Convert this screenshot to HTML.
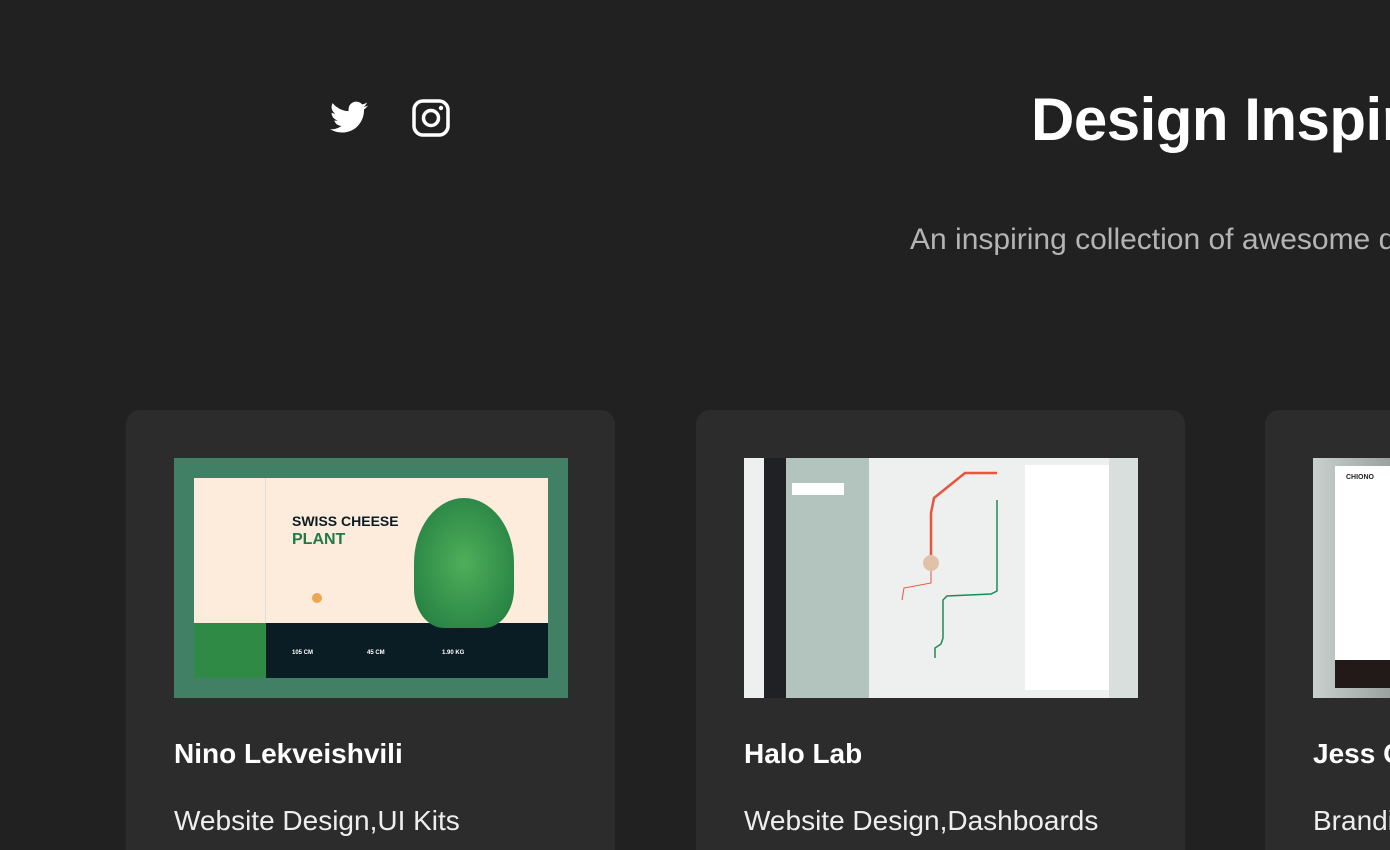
<!DOCTYPE html>
<html><head><meta charset="utf-8"><style>
*{margin:0;padding:0;box-sizing:border-box}
html,body{width:1390px;height:850px;overflow:hidden}
body{background:#212121;font-family:"Liberation Sans",sans-serif;position:relative;color:#fff}
#wrap{position:absolute;left:0;top:0;width:1390px;height:850px;overflow:hidden}
.abs{position:absolute}
h1{position:absolute;left:1031px;top:85px;font-size:60px;font-weight:bold;white-space:nowrap;letter-spacing:-0.5px}
.sub{position:absolute;left:910px;top:223px;font-size:30px;color:#b4b4b4;white-space:nowrap;font-weight:300}
.card{position:absolute;top:410px;width:489px;height:460px;background:#2c2c2c;border-radius:14px}
.img{position:absolute;left:48px;top:48px;width:394px;height:240px;overflow:hidden}
.name{position:absolute;left:48px;top:328px;font-size:28px;font-weight:bold;white-space:nowrap}
.tags{position:absolute;left:48px;top:395px;font-size:28px;color:#eee;white-space:nowrap}
</style></head><body><div id="wrap">
<svg class="abs" style="left:330px;top:101px" width="38" height="33" viewBox="0 0 24 20"><path fill="#fff" d="M24 2.4c-.9.4-1.8.7-2.8.8 1-.6 1.8-1.6 2.2-2.7-1 .6-2 1-3.1 1.2C19.400.7 18.100 0 16.600 0c-2.700 0-4.900 2.200-4.900 4.900 0 .4 0 .8.1 1.100C7.700 5.800 4.100 3.900 1.700.9c-.4.7-.7 1.600-.7 2.500 0 1.700.9 3.200 2.200 4.100-.8 0-1.600-.2-2.200-.6v.1c0 2.400 1.700 4.400 3.900 4.800-.4.1-.8.2-1.300.2-.3 0-.6 0-.9-.1.6 2 2.400 3.400 4.600 3.400-1.700 1.300-3.800 2.100-6.100 2.100-.4 0-.8 0-1.200-.1 2.200 1.400 4.800 2.200 7.500 2.200 9.100 0 14-7.500 14-14v-.6c1-.7 1.800-1.600 2.500-2.500z"/></svg>
<svg class="abs" style="left:412px;top:99px" width="38" height="38" viewBox="0 0 38 38"><rect x="2" y="2" width="34" height="34" rx="9" fill="none" stroke="#fff" stroke-width="3.5"/><circle cx="19" cy="19" r="7.5" fill="none" stroke="#fff" stroke-width="3.5"/><circle cx="29" cy="9" r="2.2" fill="#fff"/></svg>
<h1>Design Inspiration</h1>
<div class="sub">An inspiring collection of awesome design</div>

<div class="card" style="left:126px">
 <div class="img" style="background:#428066">
  <div class="abs" style="left:20px;top:20px;width:354px;height:200px;background:#fdebdc"></div>
  <div class="abs" style="left:91px;top:20px;width:1px;height:145px;background:#ddd"></div>
  <div class="abs" style="left:20px;top:165px;width:72px;height:55px;background:#2e8a45"></div>
  <div class="abs" style="left:92px;top:165px;width:282px;height:55px;background:#0b1d24"></div>
  <div class="abs" style="left:118px;top:55px;font-size:14px;font-weight:bold;color:#0b1d24">SWISS CHEESE</div>
  <div class="abs" style="left:118px;top:73px;font-size:16px;font-weight:bold;color:#1f7a45">PLANT</div>
  <div class="abs" style="left:138px;top:135px;width:10px;height:10px;border-radius:50%;background:#eea453"></div>
  <div class="abs" style="left:240px;top:40px;width:100px;height:130px;border-radius:50% 50% 30% 30%;background:radial-gradient(#4fae5a,#1f7a3f)"></div>
  <div class="abs" style="left:118px;top:192px;font-size:6px;font-weight:bold;color:#fff">105 CM</div>
  <div class="abs" style="left:193px;top:192px;font-size:6px;font-weight:bold;color:#fff">45 CM</div>
  <div class="abs" style="left:268px;top:192px;font-size:6px;font-weight:bold;color:#fff">1.90 KG</div>
 </div>
 <div class="name">Nino Lekveishvili</div>
 <div class="tags">Website Design,UI Kits</div>
</div>

<div class="card" style="left:696px">
 <div class="img" style="background:#eef0ef">
  <div class="abs" style="left:20px;top:0;width:22px;height:240px;background:#1f2124"></div>
  <div class="abs" style="left:42px;top:0;width:83px;height:240px;background:#b3c4be"></div>
  <div class="abs" style="left:365px;top:0;width:29px;height:240px;background:#d9dfdd"></div>
  <div class="abs" style="left:281px;top:7px;width:84px;height:225px;background:#fff"></div>
  <div class="abs" style="left:48px;top:25px;width:52px;height:12px;background:#fff"></div>
  <svg class="abs" style="left:125px;top:0" width="160" height="240"><path d="M128 15 L96 15 L65 40 L62 55 L62 110" stroke="#e8553e" stroke-width="2.5" fill="none"/><path d="M62 110 L62 125 L35 130 L33 142" stroke="#e8553e" stroke-width="1" fill="none"/><path d="M128 42 L128 133 L122 136 L78 138 L74 142 L74 180 L72 186 L66 190 L66 200" stroke="#1e8a55" stroke-width="1.5" fill="none"/><circle cx="62" cy="105" r="8" fill="#e1c2a8"/></svg>
 </div>
 <div class="name">Halo Lab</div>
 <div class="tags">Website Design,Dashboards</div>
</div>

<div class="card" style="left:1265px;width:125px;border-radius:14px 0 0 0">
 <div class="img" style="width:77px;background:linear-gradient(90deg,#c9d1cf,#9aa2a0)">
  <div class="abs" style="left:22px;top:8px;width:120px;height:200px;background:#fff"></div>
  <div class="abs" style="left:22px;top:202px;width:120px;height:28px;background:#221a18"></div>
  <div class="abs" style="left:33px;top:16px;font-size:7px;font-weight:bold;color:#222">CHIONO</div>
 </div>
 <div class="name" style="width:77px;overflow:hidden">Jess Chen</div>
 <div class="tags" style="width:77px;overflow:hidden">Branding</div>
</div>
</div></body></html>
